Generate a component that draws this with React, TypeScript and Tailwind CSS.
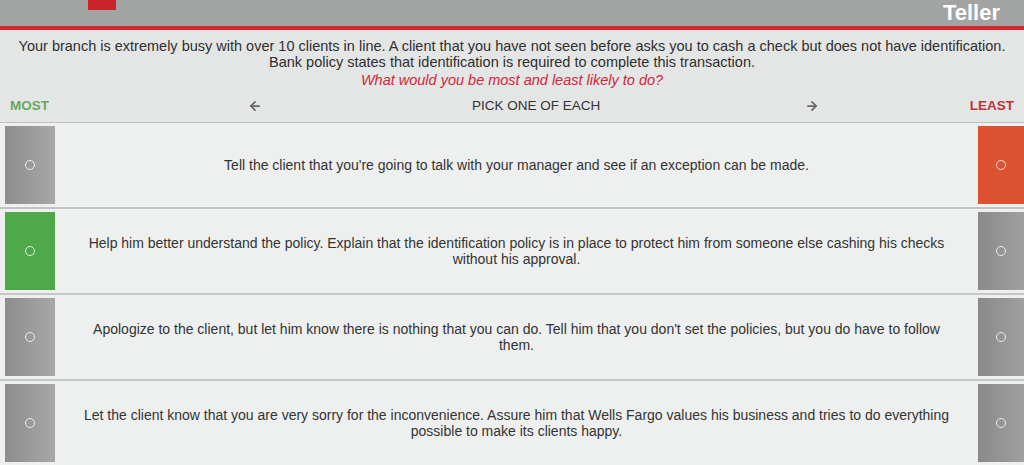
import { ArrowLeft, ArrowRight } from "lucide-react";

type Option = { text: string; most?: boolean; least?: boolean };

const options: Option[] = [
  { text: "Tell the client that you're going to talk with your manager and see if an exception can be made.", least: true },
  {
    text: "Help him better understand the policy. Explain that the identification policy is in place to protect him from someone else cashing his checks without his approval.",
    most: true,
  },
  { text: "Apologize to the client, but let him know there is nothing that you can do. Tell him that you don't set the policies, but you do have to follow them." },
  { text: "Let the client know that you are very sorry for the inconvenience. Assure him that Wells Fargo values his business and tries to do everything possible to make its clients happy." },
];

function Radio() {
  return <span className="block h-[10px] w-[10px] rounded-full border border-white/80" />;
}

function OptionRow({ option }: { option: Option }) {
  return (
    <div className="flex h-[86px] items-stretch gap-3 border-b-2 border-[#c4c6c6] bg-[#eef0ef] py-[3px]">
      <button
        className={`ml-[5px] grid w-[50px] shrink-0 place-items-center ${
          option.most ? "bg-[#4fa94a]" : "bg-gradient-to-r from-[#8d8d8d] to-[#a8a8a8]"
        }`}
      >
        <Radio />
      </button>
      <div className="flex flex-1 items-center justify-center">
        <p className="max-w-[872px] text-center text-[14px] leading-[16px] text-[#333]">{option.text}</p>
      </div>
      <button
        className={`grid w-[46px] shrink-0 place-items-center ${
          option.least ? "bg-[#dc5230]" : "bg-gradient-to-r from-[#8a8a8a] to-[#a0a0a0]"
        }`}
      >
        <Radio />
      </button>
    </div>
  );
}

export default function App() {
  return (
    <div className="h-[465px] w-[1024px] overflow-hidden bg-[#e4e6e6] font-['Liberation_Sans',Arial,sans-serif]">
      <header className="relative h-[30px] border-b-[4px] border-[#d4262b] bg-[#a2a4a4]">
        <div className="ml-[88px] h-[10px] w-[28px] bg-[#c9242a]" />
        <span className="absolute right-[24px] top-0 text-[22px] font-bold leading-[26px] text-white">Teller</span>
      </header>

      <section className="px-[14px] pt-[8px] text-center text-[14.5px] leading-[16px] text-[#2f2f2f]">
        <p>
          Your branch is extremely busy with over 10 clients in line. A client that you have not seen before asks you to cash a check but does not
          have identification. Bank policy states that identification is required to complete this transaction.
        </p>
        <p className="mt-[2px] italic text-[#d3253a]">What would you be most and least likely to do?</p>
      </section>

      <div className="mt-[8px] flex items-center px-[10px] text-[13.5px] font-bold">
        <span className="w-[60px] text-[#6aa660]">MOST</span>
        <ArrowLeft size={14} strokeWidth={3} className="ml-[178px] text-[#666]" />
        <span className="ml-[210px] font-normal text-[#333]">PICK ONE OF EACH</span>
        <ArrowRight size={14} strokeWidth={3} className="ml-[205px] text-[#666]" />
        <span className="ml-auto text-[#c0313a]">LEAST</span>
      </div>

      <div className="mt-[6px] border-t border-[#bfc1c1]">
        {options.map((o) => (
          <OptionRow key={o.text} option={o} />
        ))}
      </div>
    </div>
  );
}
